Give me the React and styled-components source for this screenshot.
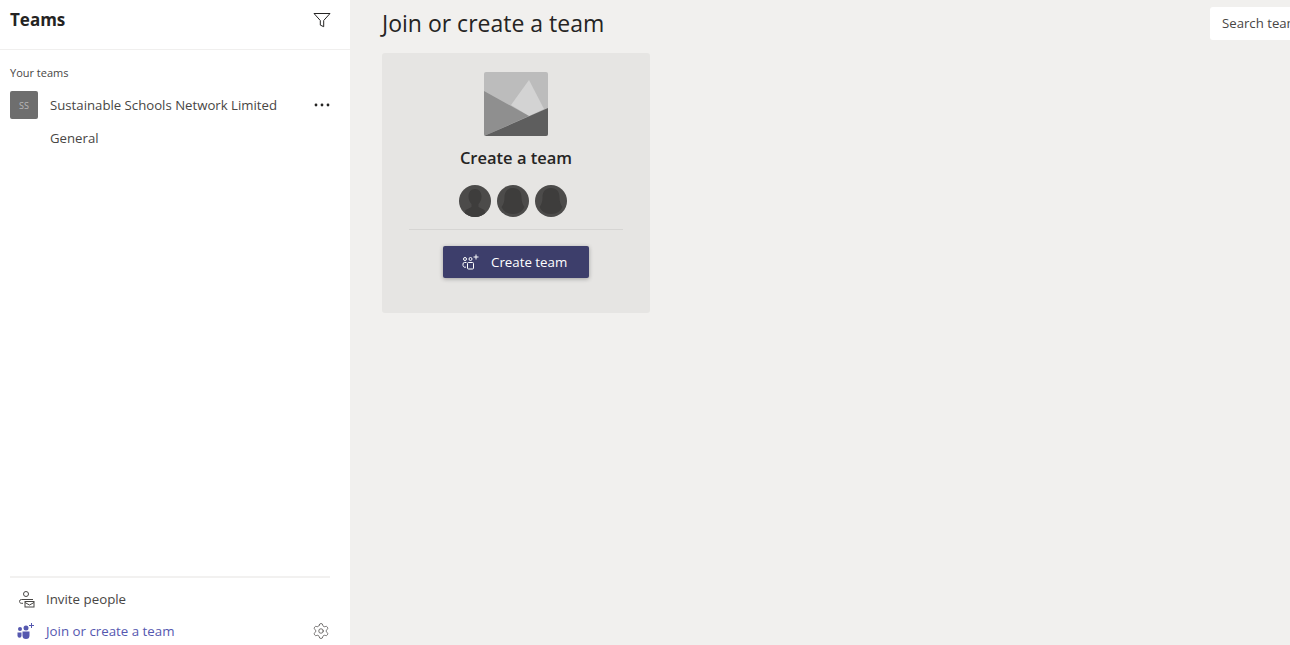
import React from "react";
import styled, { createGlobalStyle } from "styled-components";
import { Settings } from "lucide-react";

const GlobalStyle = createGlobalStyle`
  html, body {
    margin: 0;
    padding: 0;
    height: 100%;
    overflow: hidden;
  }
  body {
    font-family: "Open Sans", "Noto Sans", "Liberation Sans", sans-serif;
    color: #252423;
  }
`;

const Page = styled.div`
  display: flex;
  width: 1290px;
  height: 645px;
  overflow: hidden;
  background: #f1f0ee;
`;

const Sidebar = styled.aside`
  display: flex;
  flex-direction: column;
  flex: 0 0 350px;
  background: #fff;
`;

const SidebarHeader = styled.header`
  display: flex;
  align-items: center;
  justify-content: space-between;
  height: 49px;
  padding: 0 19px 9px 10px;
  box-sizing: border-box;
  border-bottom: 1px solid #f0efee;
  flex: 0 0 50px;
`;

const SidebarTitle = styled.h1`
  margin: 0;
  font-size: 17px;
  font-weight: 700;
  line-height: 24px;
  color: #252423;
`;

const SectionLabel = styled.div`
  margin: 15px 0 0 10px;
  font-size: 11px;
  line-height: 15px;
  color: #484644;
`;

const TeamRow = styled.div`
  display: flex;
  align-items: center;
  height: 28px;
  margin-top: 11px;
  padding: 0 20px 0 10px;
`;

const TeamAvatar = styled.div`
  display: flex;
  align-items: center;
  justify-content: center;
  flex: 0 0 28px;
  height: 28px;
  border-radius: 2px;
  background: #6e6e6e;
  color: #b9b9b9;
  font-size: 9px;
`;

const TeamName = styled.div`
  flex: 1;
  margin-left: 12px;
  font-size: 13.2px;
  color: #484644;
  white-space: nowrap;
`;

const Channel = styled.div`
  margin: 10px 0 0 50px;
  font-size: 13.2px;
  line-height: 18px;
  color: #484644;
`;

const SidebarFooter = styled.footer`
  display: flex;
  flex-direction: column;
  gap: 4px;
  margin: auto 20px 0 10px;
  padding-top: 7px;
  border-top: 2px solid #f2f1f0;
`;

const FooterRow = styled.div`
  display: flex;
  align-items: center;
  height: 28px;
  padding-left: 7px;
  font-size: 13.3px;
  color: ${(p) => (p.$accent ? "#5558af" : "#484644")};
`;

const FooterLabel = styled.span`
  flex: 1;
  margin-left: 11px;
`;

const Main = styled.main`
  flex: 1;
  display: flex;
  flex-direction: column;
  padding-left: 32px;
  min-width: 0;
`;

const MainHeader = styled.div`
  display: flex;
  align-items: flex-start;
  justify-content: space-between;
  height: 53px;
`;

const MainTitle = styled.h2`
  margin: 8px 0 0;
  font-size: 23px;
  font-weight: 400;
  line-height: 30px;
  color: #252423;
`;

const SearchBox = styled.div`
  width: 80px;
  height: 33px;
  margin-top: 7px;
  padding-left: 12px;
  box-sizing: border-box;
  overflow: hidden;
  background: #fff;
  border-radius: 3px 0 0 3px;
  font-size: 13.2px;
  line-height: 33px;
  color: #484644;
  white-space: nowrap;
`;

const Card = styled.section`
  display: flex;
  flex-direction: column;
  align-items: center;
  width: 268px;
  height: 260px;
  box-sizing: border-box;
  padding-top: 19px;
  border-radius: 3px;
  background: #e6e5e3;
`;

const CardTitle = styled.h3`
  margin: 10px 0 0;
  font-size: 16.5px;
  font-weight: 600;
  line-height: 24px;
  color: #252423;
`;

const Members = styled.div`
  display: flex;
  gap: 6px;
  margin: 15px 6px 0 0;
`;

const Divider = styled.hr`
  width: 214px;
  margin: 12px 0 0;
  border: 0;
  border-top: 1px solid #d6d5d3;
`;

const CreateButton = styled.button`
  display: flex;
  align-items: center;
  width: 146px;
  height: 32px;
  margin-top: 16px;
  padding: 0 0 0 19px;
  border: 0;
  border-radius: 2px;
  background: #3d3e6b;
  box-shadow: 0 1px 4px rgba(0, 0, 0, 0.3);
  color: #fff;
  font-family: inherit;
  font-size: 13.3px;
  font-weight: 500;
`;

const ButtonLabel = styled.span`
  margin-left: 11px;
`;

const FilterIcon = () => (
  <svg width="18" height="16" viewBox="0 0 18 16" fill="none" stroke="#252423" strokeWidth="1">
    <path d="M1 1.500h16l-6.300 7v6.200l-3.400-1.600V8.500z" strokeLinejoin="round" />
  </svg>
);

const MoreIcon = () => (
  <svg width="16" height="4" viewBox="0 0 16 4" fill="#252423">
    <circle cx="2" cy="2" r="1.400" />
    <circle cx="8" cy="2" r="1.400" />
    <circle cx="14" cy="2" r="1.400" />
  </svg>
);

const InviteIcon = () => (
  <svg width="18" height="18" viewBox="0 0 18 18" fill="none" stroke="#484644" strokeWidth="1">
    <circle cx="9" cy="4" r="2.500" />
    <path d="M16 9.500H4.500a2 2 0 0 0-2 2c0 1 .7 1.700 1.800 1.800H6" />
    <rect x="8" y="11.500" width="9" height="5.500" />
    <path d="M8 12.500l4.500 2.500 4.500-2.500" />
  </svg>
);

const JoinIcon = () => (
  <svg width="18" height="16" viewBox="0 0 18 16" fill="#5558af">
    <circle cx="3" cy="6" r="2" />
    <circle cx="9" cy="5" r="2.500" />
    <path d="M0.500 9.500h4v3.200a2 2 0 0 1-4 0z" />
    <path d="M5.500 8.500h7v4a3.500 3.500 0 0 1-7 0z" />
    <path d="M14.500 0v5M12 2.500h5" stroke="#5558af" strokeWidth="1" fill="none" />
  </svg>
);

const TeamPicture = () => (
  <svg width="64" height="64" viewBox="0 0 64 64">
    <defs>
      <clipPath id="team-picture-clip">
        <rect width="64" height="64" rx="2" />
      </clipPath>
    </defs>
    <g clipPath="url(#team-picture-clip)">
      <rect width="64" height="64" fill="#bcbcbc" />
      <path d="M45 8L60 37 45 44 27 33z" fill="#d3d3d3" />
      <path d="M0 19L45 44 0 64z" fill="#8f8f8f" />
      <path d="M0 64L64 36V64z" fill="#5e5e5e" />
    </g>
  </svg>
);

const MemberIcon = ({ long }) => (
  <svg width="32" height="32" viewBox="0 0 32 32">
    <defs>
      <clipPath id={long ? "member-clip-long" : "member-clip"}>
        <circle cx="16" cy="16" r="16" />
      </clipPath>
    </defs>
    <circle cx="16" cy="16" r="16" fill="#4c4b4a" />
    <g clipPath={`url(#${long ? "member-clip-long" : "member-clip"})`} fill="#3e3d3c">
      {long ? (
        <path d="M16 3c5.500 0 8.500 3.500 8.500 9.500 0 4 1 7 3 9.500-2 4-5 7-11.500 7S6.500 26 4.500 22c2-2.500 3-5.500 3-9.500C7.500 6.500 10.500 3 16 3z" />
      ) : (
        <path d="M16 4c4 0 6.500 3 6.500 7.500 0 3-1.200 6-3 7.500v3l6 3 1 7H5.500l1-7 6-3v-3c-1.800-1.500-3-4.500-3-7.500C9.500 7 12 4 16 4z" />
      )}
    </g>
  </svg>
);

const CreateTeamIcon = () => (
  <svg width="18" height="16" viewBox="0 0 18 16" fill="none" stroke="#fff" strokeWidth="1">
    <circle cx="3" cy="5" r="1.500" />
    <circle cx="8.500" cy="5" r="1.500" />
    <path d="M4.500 8.500H2.500a1.500 1.500 0 0 0-1.500 1.500v1.500a2 2 0 0 0 3 1.500" />
    <rect x="5.500" y="8.500" width="6" height="6.500" rx="1" />
    <path d="M14 0.500v5M11.500 3h5" />
  </svg>
);

export default function App() {
  return (
    <>
      <GlobalStyle />
      <Page>
        <Sidebar>
          <SidebarHeader>
            <SidebarTitle>Teams</SidebarTitle>
            <FilterIcon />
          </SidebarHeader>
          <SectionLabel>Your teams</SectionLabel>
          <TeamRow>
            <TeamAvatar>SS</TeamAvatar>
            <TeamName>Sustainable Schools Network Limited</TeamName>
            <MoreIcon />
          </TeamRow>
          <Channel>General</Channel>
          <SidebarFooter>
            <FooterRow>
              <InviteIcon />
              <FooterLabel>Invite people</FooterLabel>
            </FooterRow>
            <FooterRow $accent>
              <JoinIcon />
              <FooterLabel>Join or create a team</FooterLabel>
              <Settings size={18} strokeWidth={1} color="#484644" />
            </FooterRow>
          </SidebarFooter>
        </Sidebar>
        <Main>
          <MainHeader>
            <MainTitle>Join or create a team</MainTitle>
            <SearchBox>Search teams</SearchBox>
          </MainHeader>
          <Card>
            <TeamPicture />
            <CardTitle>Create a team</CardTitle>
            <Members>
              <MemberIcon />
              <MemberIcon long />
              <MemberIcon long />
            </Members>
            <Divider />
            <CreateButton>
              <CreateTeamIcon />
              <ButtonLabel>Create team</ButtonLabel>
            </CreateButton>
          </Card>
        </Main>
      </Page>
    </>
  );
}
